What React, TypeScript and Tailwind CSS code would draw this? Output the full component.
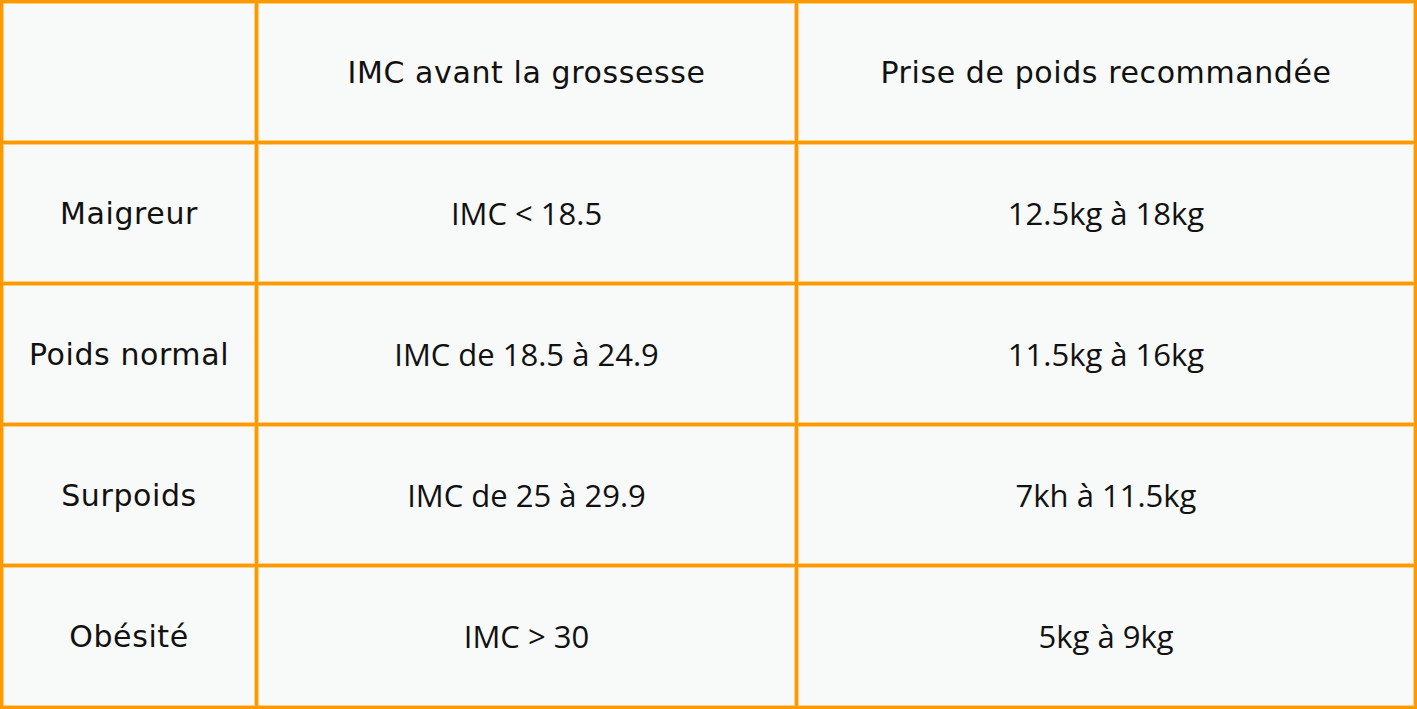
const rows = [
  { label: 'Maigreur', imc: 'IMC < 18.5', gain: '12.5kg à 18kg' },
  { label: 'Poids normal', imc: 'IMC de 18.5 à 24.9', gain: '11.5kg à 16kg' },
  { label: 'Surpoids', imc: 'IMC de 25 à 29.9', gain: '7kh à 11.5kg' },
  { label: 'Obésité', imc: 'IMC > 30', gain: '5kg à 9kg' },
];

const head = "font-['DejaVu_Sans',sans-serif] text-[30px] tracking-[0.6px]";
const body = "font-['Open_Sans',sans-serif] text-[31px]";
const cell = 'bg-[#f8f9f9] border border-[#ffcf85] flex items-center justify-center';

export default function App() {
  return (
    <div className="w-[1417px] h-[709px] bg-[#ff9900] p-[3px]">
      <div className="grid h-full grid-cols-[252px_537px_616px] grid-rows-[138px_138px_138px_138px_139px] gap-[3px] text-[#111]">
        <div className={cell} />
        <div className={`${cell} ${head}`}>IMC avant la grossesse</div>
        <div className={`${cell} ${head}`}>Prise de poids recommandée</div>
        {rows.map((r) => (
          <>
            <div key={r.label} className={`${cell} ${head}`}>{r.label}</div>
            <div className={`${cell} ${body}`}>{r.imc}</div>
            <div className={`${cell} ${body}`}>{r.gain}</div>
          </>
        ))}
      </div>
    </div>
  );
}
